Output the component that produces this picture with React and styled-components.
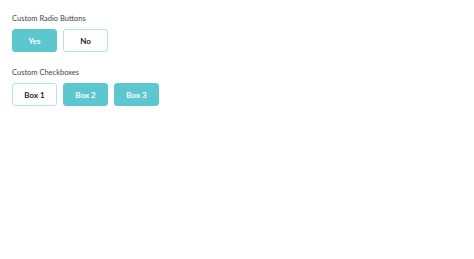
import React, { useState } from "react";
import styled, { createGlobalStyle } from "styled-components";

const GlobalStyle = createGlobalStyle`
  body {
    margin: 0;
    background: #ffffff;
    font-family: Lato, "Open Sans", sans-serif;
  }
`;

const Page = styled.div`
  padding: 14px 12px;
  display: flex;
  flex-direction: column;
  gap: 16px;
`;

const Group = styled.div`
  display: flex;
  flex-direction: column;
  gap: 5px;
`;

const Label = styled.div`
  font-size: 7.5px;
  color: #444;
  line-height: 10px;
`;

const Row = styled.div`
  display: flex;
  gap: 6px;
`;

const Option = styled.button`
  width: 45px;
  height: 23px;
  box-sizing: border-box;
  border-radius: 3px;
  border: 1px solid ${(p) => (p.$active ? "#5dc7cf" : "#b4e1e4")};
  background: ${(p) => (p.$active ? "#5dc7cf" : "#ffffff")};
  color: ${(p) => (p.$active ? "#ffffff" : "#222")};
  font-family: Lato, "Open Sans", sans-serif;
  font-weight: 700;
  font-size: 8px;
  padding: 0;
  cursor: pointer;

  &:focus {
    outline: none;
  }
`;

const App = () => {
  const [answer, setAnswer] = useState("Yes");
  const [boxes, setBoxes] = useState({ "Box 1": false, "Box 2": true, "Box 3": true });

  return (
    <>
      <GlobalStyle />
      <Page>
        <Group>
          <Label>Custom Radio Buttons</Label>
          <Row>
            {["Yes", "No"].map((v) => (
              <Option key={v} $active={answer === v} onClick={() => setAnswer(v)}>
                {v}
              </Option>
            ))}
          </Row>
        </Group>
        <Group>
          <Label>Custom Checkboxes</Label>
          <Row>
            {Object.keys(boxes).map((b) => (
              <Option
                key={b}
                $active={boxes[b]}
                onClick={() => setBoxes({ ...boxes, [b]: !boxes[b] })}
              >
                {b}
              </Option>
            ))}
          </Row>
        </Group>
      </Page>
    </>
  );
};

export default App;
